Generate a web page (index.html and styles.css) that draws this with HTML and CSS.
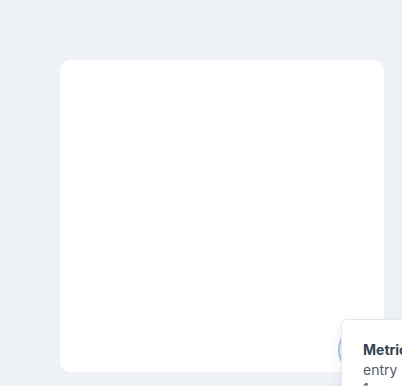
FILE: index.html
```html
<!DOCTYPE html>
<html lang="en">
<head>
    <meta charset="UTF-8">
    <meta name="viewport" content="width=device-width, initial-scale=1.0">
    <title>Metrics</title>
    <link rel="stylesheet" href="styles.css">
</head>
<body>
    <div class="panel"></div>
    <!-- marker under the tooltip -->
    <div class="marker"></div>
    <div class="tooltip">
        <div class="tooltip-title">Metric</div>
        <div class="tooltip-text">entry</div>
        <div class="tooltip-text">1</div>
    </div>
</body>
</html>
```

FILE: styles.css
```css
/* page */
body {
    margin: 0;
    padding: 60px;
    background-color: #eef1f6;
    font-family: Inter, 'Noto Sans', sans-serif;
    width: 402px;
    height: 386px;
    box-sizing: border-box;
    overflow: hidden;
    position: relative;
}

/* main card */
.panel {
    width: 324px;
    height: 312px;
    background-color: #ffffff;
    border-radius: 10px;
}

.marker {
    position: absolute;
    left: 338px;
    top: 323px;
    width: 54px;
    height: 54px;
    border: 2px solid #a9c3f2;
    border-radius: 50%;
    box-sizing: border-box;
}

/* hover tooltip */
.tooltip {
    position: absolute;
    left: 341px;
    top: 319px;
    width: 180px;
    padding: 20px 21px;
    background-color: #ffffff;
    border: 1px solid #e3e7ee;
    border-radius: 6px;
    box-shadow: 0 4px 12px rgba(15, 23, 42, 0.08);
    box-sizing: border-box;
}

.tooltip-title {
    font-size: 14px;
    font-weight: 700;
    line-height: 20px;
    color: #374151;
}

.tooltip-text {
    font-size: 14px;
    line-height: 19px;
    color: #555b66;
}
```
